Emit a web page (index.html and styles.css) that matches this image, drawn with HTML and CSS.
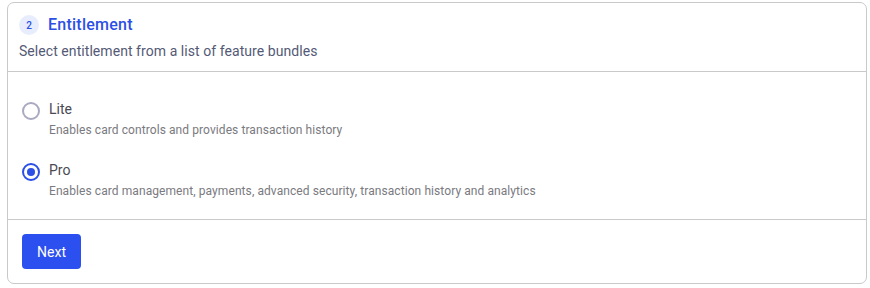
FILE: index.html
```html
<!DOCTYPE html>
<html>
<head>
<meta charset="utf-8">
<link rel="stylesheet" href="styles.css">
</head>
<body>
<div class="card">
  <div class="card-header">
    <div class="title-row">
      <span class="step">2</span>
      <h2 class="title">Entitlement</h2>
    </div>
    <p class="subtitle">Select entitlement from a list of feature bundles</p>
  </div>
  <div class="card-body">
    <label class="option">
      <span class="radio"></span>
      <span class="option-text">
        <span class="option-label">Lite</span>
        <span class="option-desc">Enables card controls and provides transaction history</span>
      </span>
    </label>
    <label class="option">
      <span class="radio checked"></span>
      <span class="option-text">
        <span class="option-label">Pro</span>
        <span class="option-desc">Enables card management, payments, advanced security, transaction history and analytics</span>
      </span>
    </label>
  </div>
  <div class="card-footer">
    <button class="btn">Next</button>
  </div>
</div>
</body>
</html>
```

FILE: styles.css
```css
* { box-sizing: border-box; }
body {
  margin: 0;
  padding: 2px 3px 0 7px;
  font-family: Roboto, "Liberation Sans", sans-serif;
  background: #fff;
}
.card {
  width: 860px;
  height: 282px;
  border: 1px solid #c9c9c9;
  border-radius: 7px;
  display: flex;
  flex-direction: column;
}
.card-header {
  padding: 12px 12px 10px 11px;
  border-bottom: 1px solid #c9c9c9;
}
.title-row {
  display: flex;
  align-items: center;
  gap: 9px;
  height: 20px;
}
.step {
  width: 20px;
  height: 20px;
  border-radius: 50%;
  background: #e8edfd;
  color: #2c4fe6;
  font-size: 10px;
  font-weight: 500;
  display: flex;
  align-items: center;
  justify-content: center;
}
.title {
  margin: 0;
  font-size: 16px;
  font-weight: 500;
  letter-spacing: 0.25px;
  color: #2c4fe6;
  line-height: 20px;
}
.subtitle {
  margin: 6px 0 0;
  font-size: 14px;
  line-height: 20px;
  letter-spacing: 0.06px;
  color: #545a76;
}
.card-body {
  padding: 29px 14px 20px 14px;
  display: flex;
  flex-direction: column;
  gap: 24px;
  border-bottom: 1px solid #c9c9c9;
}
.option {
  display: flex;
  align-items: flex-start;
  gap: 9px;
}
.radio {
  width: 18px;
  height: 18px;
  margin-top: 1px;
  border: 2px solid #a9a9c2;
  border-radius: 50%;
  flex: none;
  display: flex;
  align-items: center;
  justify-content: center;
}
.radio.checked {
  border-color: #2c4fe6;
}
.radio.checked::after {
  content: "";
  width: 8px;
  height: 8px;
  border-radius: 50%;
  background: #2c4fe6;
}
.option-text {
  display: flex;
  flex-direction: column;
  margin-top: -2px;
}
.option-label {
  font-size: 14px;
  line-height: 20px;
  color: #4a4a52;
}
.option-desc {
  margin-top: 3px;
  font-size: 12px;
  line-height: 16px;
  letter-spacing: 0.08px;
  color: #7a7a80;
}
.card-footer {
  padding: 14px 14px;
}
.btn {
  width: 59px;
  height: 35px;
  border: 0;
  border-radius: 4px;
  background: #2c4ff0;
  color: #fff;
  font-family: inherit;
  font-size: 14px;
  padding: 0;
}
```
